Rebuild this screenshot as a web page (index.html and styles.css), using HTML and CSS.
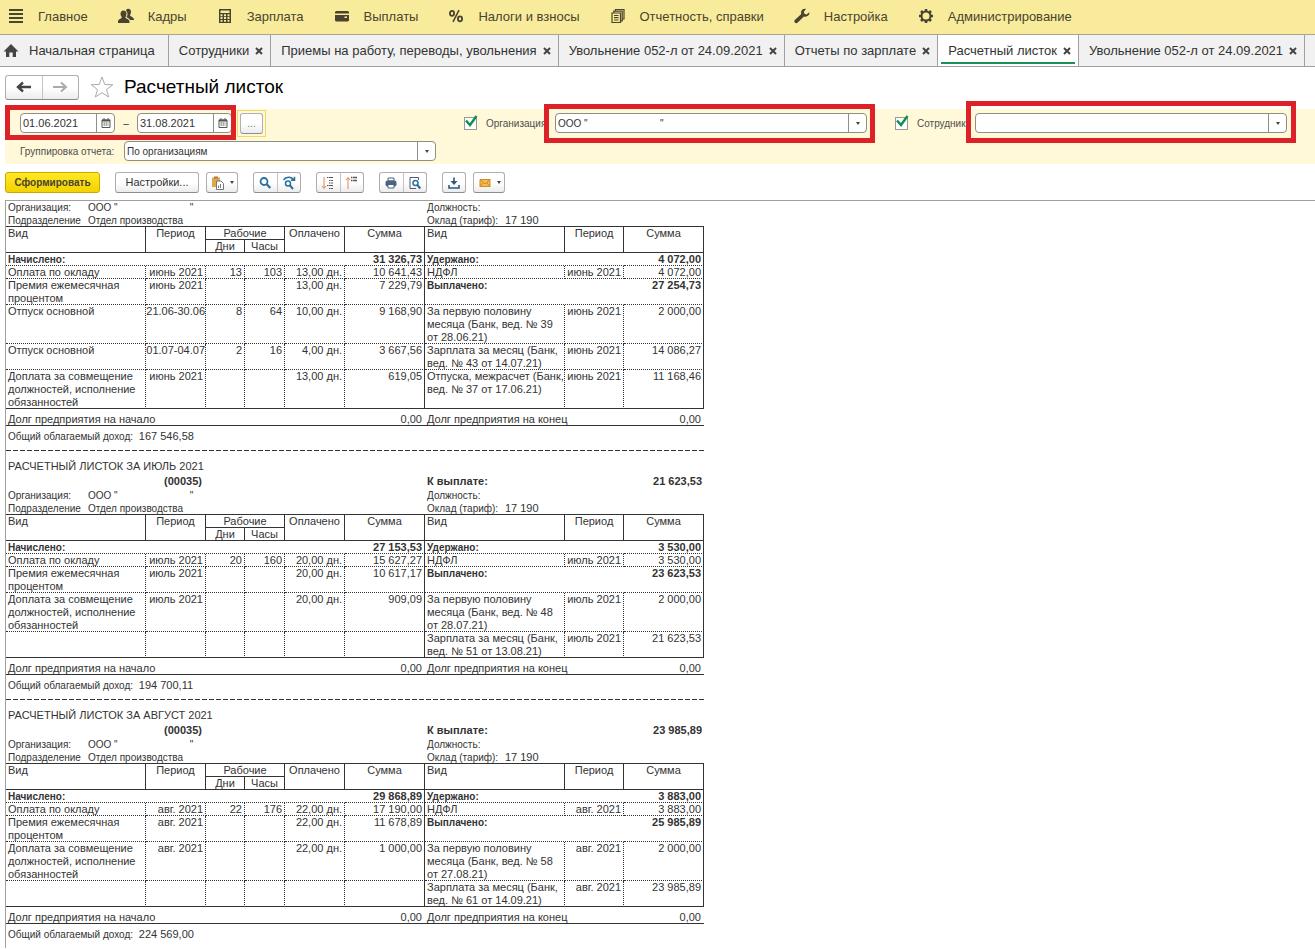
FILE: index.html
```html
<!DOCTYPE html>
<html lang="ru">
<head>
<meta charset="utf-8">
<title>Расчетный листок</title>
<link rel="stylesheet" href="styles.css">
</head>
<body>
<nav class="menu">
  <a class="menu-item" href="#"><svg class="icon" viewBox="0 0 16 16"><path d="M1 2h14M1 6h14M1 10h14M1 14h14" stroke="#4a432f" stroke-width="2"/></svg>Главное</a>
  <a class="menu-item" href="#"><svg class="icon" viewBox="0 0 16 16" fill="#4a432f"><path d="M8 2.500C8.400 0 13 0 13 3.500c0 2-.8 3-1 4 .3 1.200 4 1.400 4 4V12h-4C11 10 9 9.500 8.500 9c1.500-2 1.500-4-.5-6.500z"/><path d="M5.500 2.500c2 0 3 1.400 3 3.200S7.700 8.500 7.500 9.500c.2 1.200 4 1.500 4 4V15H0v-1.500c0-2.500 3.600-2.800 3.800-4-.3-1-1.300-2-1.300-3.800s1-3.200 3-3.200z"/></svg>Кадры</a>
  <a class="menu-item" href="#"><svg class="icon" viewBox="0 0 16 16"><path fill="#4a432f" fill-rule="evenodd" d="M2 1h12v14H2zM3.500 2.500V5h9V2.500zM3.500 6.200v2h2v-2zm3.500 0v2h2v-2zm3.500 0v2h2v-2zM3.500 9v2h2V9zM7 9v2h2V9zm3.500 0v2h2V9zM3.500 12v1.800h2V12zM7 12v1.800h2V12zm3.500 0v1.800h2V12z"/></svg>Зарплата</a>
  <a class="menu-item" href="#"><svg class="icon" viewBox="0 0 16 16"><path fill="#4a432f" fill-rule="evenodd" d="M2 3h12l1 1v1.500H1V4zM1 7h14v5.500l-1 1H2l-1-1zm9.500 1.500V10H13V8.500z"/></svg>Выплаты</a>
  <a class="menu-item" href="#"><svg class="icon" viewBox="0 0 16 16" fill="none" stroke="#4a432f" stroke-width="1.800"><ellipse cx="4" cy="5.300" rx="2.100" ry="2.500"/><ellipse cx="12" cy="10.800" rx="2.100" ry="2.500"/><path d="M11 2.200l-6 11.600" stroke-width="1.500"/></svg>Налоги и взносы</a>
  <a class="menu-item" href="#"><svg class="icon" viewBox="0 0 16 16" fill="none" stroke="#4a432f" stroke-width="1.200"><path d="M5.500 3V1.500h8.500V11h-1.500M3.800 4.800V3.200h8.400v9.600h-1.500M2 5h8.500v9.500H2zM4 7.500h4.500M4 9.700h4.500M4 12h4.500"/></svg>Отчетность, справки</a>
  <a class="menu-item" href="#"><svg class="icon" viewBox="0 0 16 16"><path fill="#4a432f" d="M15.300 4.200l-2.700 2.200-2.200-.7-.6-2L12 .9C9.500.2 7 2 7 4.500c0 .6.100 1 .3 1.500L.8 12c-1.500 1.700 1 4.200 2.700 2.700L9.900 8.400c3.100 1 6.100-1 5.400-4.200z"/></svg>Настройка</a>
  <a class="menu-item" href="#"><svg class="icon" viewBox="0 0 16 16" fill="none" stroke="#4a432f"><circle cx="8" cy="8" r="4.500" stroke-width="2"/><path stroke-width="2.600" d="M8 1V3.500M8 12.500v2.500M1 8h2.500M12.500 8h2.500M3 3l1.500 1.500M11.500 11.500L13 13M3 13l1.500-1.500M11.500 4.500L13 3"/></svg>Администрирование</a>
</nav>

<div class="tabs">
  <a class="tab tab-home" href="#"><svg class="icon" viewBox="0 0 16 16"><path fill="#444" d="M8 1l7.500 7.500H13V14H9.700V9.500H6.300V14H3V8.500H.5z"/></svg>Начальная страница</a>
  <a class="tab" href="#">Сотрудники<svg class="close" viewBox="0 0 8 8"><path d="M1 1l6 6M7 1L1 7"/></svg></a>
  <a class="tab" href="#">Приемы на работу, переводы, увольнения<svg class="close" viewBox="0 0 8 8"><path d="M1 1l6 6M7 1L1 7"/></svg></a>
  <a class="tab" href="#">Увольнение 052-л от 24.09.2021<svg class="close" viewBox="0 0 8 8"><path d="M1 1l6 6M7 1L1 7"/></svg></a>
  <a class="tab" href="#">Отчеты по зарплате<svg class="close" viewBox="0 0 8 8"><path d="M1 1l6 6M7 1L1 7"/></svg></a>
  <a class="tab tab-active" href="#">Расчетный листок<svg class="close" viewBox="0 0 8 8"><path d="M1 1l6 6M7 1L1 7"/></svg></a>
  <a class="tab" href="#">Увольнение 052-л от 24.09.2021<svg class="close" viewBox="0 0 8 8"><path d="M1 1l6 6M7 1L1 7"/></svg></a>
</div>

<header class="page-head">
  <div class="btn-group history">
    <button type="button" aria-label="Назад"><svg viewBox="0 0 16 12" width="16" height="12"><path d="M15 6H3M7 1.500L2 6l5 4.500" fill="none" stroke="#444" stroke-width="2.400"/></svg></button>
    <button type="button" aria-label="Вперед"><svg viewBox="0 0 16 12" width="16" height="12"><path d="M1 6h12M9 1.500L14 6l-5 4.500" fill="none" stroke="#aaa" stroke-width="2"/></svg></button>
  </div>
  <svg class="star" viewBox="0 0 24 22"><path d="M12 1l2.800 7.500 8 .2-6.300 4.900L18.700 21 12 16.700 5.300 21l2.200-7.400L1.200 8.700l8-.2z" fill="#fff" stroke="#aaa"/></svg>
  <h1>Расчетный листок</h1>
</header>

<form class="filters">
  <div class="filter-row">
    <div class="period">
      <div class="marked marked-dates">
        <div class="field date"><input type="text" value="01.06.2021" aria-label="Начало периода"><button type="button" class="addon" aria-label="Календарь"><svg viewBox="0 0 10 10" width="10" height="10"><path d="M1 2h8v7.500H1z" fill="#fff" stroke="#555"/><path d="M1 2.500h8" stroke="#555" stroke-width="2"/><path d="M3 0v2M7 0v2M2.500 5h5M2.500 7h5" stroke="#555" stroke-dasharray="1.500 .5"/></svg></button></div>
        <span class="dash">–</span>
        <div class="field date"><input type="text" value="31.08.2021" aria-label="Конец периода"><button type="button" class="addon" aria-label="Календарь"><svg viewBox="0 0 10 10" width="10" height="10"><path d="M1 2h8v7.500H1z" fill="#fff" stroke="#555"/><path d="M1 2.500h8" stroke="#555" stroke-width="2"/><path d="M3 0v2M7 0v2M2.500 5h5M2.500 7h5" stroke="#555" stroke-dasharray="1.500 .5"/></svg></button></div>
      </div>
      <div class="more-frame"><button type="button" class="more">...</button></div>
    </div>
    <div class="filter">
      <label class="check label-org"><input type="checkbox" checked><svg class="tick" viewBox="0 0 14 14"><path d="M2 5.500l4 4.500L12.500 1" fill="none" stroke="#0f8f50" stroke-width="2.400"/></svg>Организация:</label>
      <div class="marked marked-org"><div class="field combo"><select aria-label="Организация"><option>ООО "&nbsp;&nbsp;&nbsp;&nbsp;&nbsp;&nbsp;&nbsp;&nbsp;&nbsp;&nbsp;&nbsp;&nbsp;&nbsp;&nbsp;&nbsp;&nbsp;&nbsp;&nbsp;&nbsp;&nbsp;&nbsp;&nbsp;&nbsp;&nbsp;&nbsp;&nbsp;"</option></select><span class="addon arrow"></span></div></div>
    </div>
    <div class="filter">
      <label class="check label-emp"><input type="checkbox" checked><svg class="tick" viewBox="0 0 14 14"><path d="M2 5.500l4 4.500L12.500 1" fill="none" stroke="#0f8f50" stroke-width="2.400"/></svg>Сотрудник:</label>
      <div class="marked marked-emp"><div class="field combo"><select aria-label="Сотрудник"><option></option></select><span class="addon arrow"></span></div></div>
    </div>
  </div>
  <div class="grouping">
    <label for="grouping">Группировка отчета:</label>
    <div class="field combo"><select id="grouping"><option>По организациям</option></select><span class="addon arrow"></span></div>
  </div>
</form>

<div class="toolbar">
  <button type="button" class="btn primary">Сформировать</button>
  <button type="button" class="btn settings">Настройки...</button>
  <button type="button" class="btn drop" aria-label="Варианты"><svg width="14" height="14" viewBox="0 0 14 14"><path d="M1 1.500h8V11H1z" fill="#e0a84e"/><path d="M3 .5h4v2H3z" fill="#a97b35"/><path d="M5.500 5h4.500l2.500 2.500v6h-7z" fill="#fff" stroke="#777"/><path d="M7.500 12V9.500M9.500 12V8" stroke="#777"/></svg><span class="arrow-down"></span></button>
  <div class="btn-group pair-a">
    <button type="button" aria-label="Найти"><svg width="14" height="14" viewBox="0 0 14 14" fill="none" stroke="#2a6f9e"><circle cx="6" cy="5.500" r="3.500" stroke-width="1.800"/><path d="M8.500 8l3.800 4" stroke-width="2.200"/></svg></button>
    <button type="button" aria-label="Найти далее"><svg width="14" height="14" viewBox="0 0 14 14" fill="none" stroke="#2a6f9e"><path d="M1.500 4C4 .5 9 .5 11.500 3.500M12.500.8v3.500H9" stroke-width="1.500"/><circle cx="6" cy="7.500" r="2.500" stroke-width="1.500"/><path d="M8 9.500l3 3.500" stroke-width="2"/></svg></button>
  </div>
  <div class="btn-group pair-b">
    <button type="button" aria-label="Развернуть"><svg width="14" height="14" viewBox="0 0 14 14" fill="none"><path d="M3 1v11M1 10l2 2.500L5 10" stroke="#dd8a4a"/><path d="M6 1.500h6M8 4.500h4M8 7h4M6 9.500h6M8 12.500h4" stroke="#555" stroke-dasharray="1.500 .6 6"/></svg></button>
    <button type="button" aria-label="Свернуть"><svg width="14" height="14" viewBox="0 0 14 14" fill="none"><path d="M3 13V1.500M1 4l2-2.500L5 4" stroke="#dd8a4a"/><path d="M6 1.500h6M6 4.500h6" stroke="#555" stroke-width="1.500" stroke-dasharray="1.500 .6 6"/></svg></button>
  </div>
  <div class="btn-group pair-b">
    <button type="button" aria-label="Печать"><svg width="14" height="14" viewBox="0 0 14 14"><path d="M4 2h6v3H4z" fill="#fff" stroke="#4a6580"/><rect x="1.500" y="4.500" width="11" height="6" rx="2" fill="#4a6580"/><path d="M4 8.500h6v3.500H4z" fill="#fff" stroke="#4a6580"/></svg></button>
    <button type="button" aria-label="Предварительный просмотр"><svg width="14" height="14" viewBox="0 0 14 14" fill="none" stroke="#2a6f9e"><path d="M8 12.500H2v-11h8.500V4" stroke="#557"/><circle cx="7.500" cy="7" r="2.500" stroke-width="1.500"/><path d="M9.300 9l3 3.500" stroke-width="2"/></svg></button>
  </div>
  <button type="button" class="btn save" aria-label="Сохранить"><svg width="14" height="14" viewBox="0 0 14 14"><path d="M2 9v3h10V9" fill="none" stroke="#2d5878" stroke-width="1.600"/><path d="M6.200 1.500h1.600V5h2.700L7 9 3.500 5h2.700z" fill="#2d5878"/></svg></button>
  <button type="button" class="btn drop" aria-label="Отправить"><svg width="14" height="14" viewBox="0 0 14 14" fill="#f2bd55" stroke="#cf8a25"><path d="M2 3.500h10v7H2z"/><path d="M2 3.500l5 4.500 5-4.500M2 10.500l3.500-4M12 10.500l-3.500-4" fill="none"/></svg><span class="arrow-down"></span></button>
</div>

<main class="sheet">
  <section class="slip">
    <div class="slip-info"><span>Организация:</span><span class="org">ООО "<i></i>"</span><span>Должность:</span><span>Подразделение</span><span>Отдел производства</span><span>Оклад (тариф): <b class="num">17 190</b></span></div>
    <table>
      <colgroup><col class="c-kind"><col class="c-period"><col class="c-days"><col class="c-hours"><col class="c-period"><col class="c-sum"><col class="c-kind"><col class="c-period2"><col class="c-sum"></colgroup>
      <thead>
        <tr><th rowspan="2" class="kind">Вид</th><th rowspan="2">Период</th><th colspan="2">Рабочие</th><th rowspan="2">Оплачено</th><th rowspan="2">Сумма</th><th rowspan="2" class="kind">Вид</th><th rowspan="2">Период</th><th rowspan="2">Сумма</th></tr>
        <tr><th>Дни</th><th>Часы</th></tr>
      </thead>
      <tbody>
        <tr><td colspan="5" class="total kind">Начислено:</td><td class="total sum">31 326,73</td><td colspan="2" class="total kind">Удержано:</td><td class="total sum">4 072,00</td></tr>
        <tr><td class="kind">Оплата по окладу</td><td>июнь 2021</td><td>13</td><td>103</td><td>13,00 дн.</td><td class="sum">10 641,43</td><td class="kind">НДФЛ</td><td>июнь 2021</td><td class="sum">4 072,00</td></tr>
        <tr><td class="kind"><p>Премия ежемесячная процентом</p></td><td>июнь 2021</td><td></td><td></td><td>13,00 дн.</td><td class="sum">7 229,79</td><td colspan="2" class="total kind">Выплачено:</td><td class="total sum">27 254,73</td></tr>
        <tr><td class="kind">Отпуск основной</td><td class="range">21.06-30.06</td><td>8</td><td>64</td><td>10,00 дн.</td><td class="sum">9 168,90</td><td class="kind"><p>За первую половину<br>месяца (Банк, вед. № 39<br>от 28.06.21)</p></td><td>июнь 2021</td><td class="sum">2 000,00</td></tr>
        <tr><td class="kind">Отпуск основной</td><td class="range">01.07-04.07</td><td>2</td><td>16</td><td>4,00 дн.</td><td class="sum">3 667,56</td><td class="kind"><p>Зарплата за месяц (Банк,<br>вед. № 43 от 14.07.21)</p></td><td>июнь 2021</td><td class="sum">14 086,27</td></tr>
        <tr><td class="kind"><p>Доплата за совмещение должностей, исполнение обязанностей</p></td><td>июнь 2021</td><td></td><td></td><td>13,00 дн.</td><td class="sum">619,05</td><td class="kind"><p>Отпуска, межрасчет (Банк,<br>вед. № 37 от 17.06.21)</p></td><td>июнь 2021</td><td class="sum">11 168,46</td></tr>
      </tbody>
    </table>
    <div class="debt"><span>Долг предприятия на начало</span><span class="num">0,00</span><span>Долг предприятия на конец</span><span class="num">0,00</span></div>
    <div class="income">Общий облагаемый доход: <span class="num">167 546,58</span></div>
  </section>

  <section class="slip">
    <h2>РАСЧЕТНЫЙ ЛИСТОК ЗА ИЮЛЬ 2021</h2>
    <div class="payable"><span class="code">(00035)</span><span>К выплате:</span><span class="amount">21 623,53</span></div>
    <div class="slip-info"><span>Организация:</span><span class="org">ООО "<i></i>"</span><span>Должность:</span><span>Подразделение</span><span>Отдел производства</span><span>Оклад (тариф): <b class="num">17 190</b></span></div>
    <table>
      <colgroup><col class="c-kind"><col class="c-period"><col class="c-days"><col class="c-hours"><col class="c-period"><col class="c-sum"><col class="c-kind"><col class="c-period2"><col class="c-sum"></colgroup>
      <thead>
        <tr><th rowspan="2" class="kind">Вид</th><th rowspan="2">Период</th><th colspan="2">Рабочие</th><th rowspan="2">Оплачено</th><th rowspan="2">Сумма</th><th rowspan="2" class="kind">Вид</th><th rowspan="2">Период</th><th rowspan="2">Сумма</th></tr>
        <tr><th>Дни</th><th>Часы</th></tr>
      </thead>
      <tbody>
        <tr><td colspan="5" class="total kind">Начислено:</td><td class="total sum">27 153,53</td><td colspan="2" class="total kind">Удержано:</td><td class="total sum">3 530,00</td></tr>
        <tr><td class="kind">Оплата по окладу</td><td>июль 2021</td><td>20</td><td>160</td><td>20,00 дн.</td><td class="sum">15 627,27</td><td class="kind">НДФЛ</td><td>июль 2021</td><td class="sum">3 530,00</td></tr>
        <tr><td class="kind"><p>Премия ежемесячная процентом</p></td><td>июль 2021</td><td></td><td></td><td>20,00 дн.</td><td class="sum">10 617,17</td><td colspan="2" class="total kind">Выплачено:</td><td class="total sum">23 623,53</td></tr>
        <tr><td class="kind"><p>Доплата за совмещение должностей, исполнение обязанностей</p></td><td>июль 2021</td><td></td><td></td><td>20,00 дн.</td><td class="sum">909,09</td><td class="kind"><p>За первую половину<br>месяца (Банк, вед. № 48<br>от 28.07.21)</p></td><td>июль 2021</td><td class="sum">2 000,00</td></tr>
        <tr><td></td><td></td><td></td><td></td><td></td><td class="sum"></td><td class="kind"><p>Зарплата за месяц (Банк,<br>вед. № 51 от 13.08.21)</p></td><td>июль 2021</td><td class="sum">21 623,53</td></tr>
      </tbody>
    </table>
    <div class="debt"><span>Долг предприятия на начало</span><span class="num">0,00</span><span>Долг предприятия на конец</span><span class="num">0,00</span></div>
    <div class="income">Общий облагаемый доход: <span class="num">194 700,11</span></div>
  </section>

  <section class="slip">
    <h2>РАСЧЕТНЫЙ ЛИСТОК ЗА АВГУСТ 2021</h2>
    <div class="payable"><span class="code">(00035)</span><span>К выплате:</span><span class="amount">23 985,89</span></div>
    <div class="slip-info"><span>Организация:</span><span class="org">ООО "<i></i>"</span><span>Должность:</span><span>Подразделение</span><span>Отдел производства</span><span>Оклад (тариф): <b class="num">17 190</b></span></div>
    <table>
      <colgroup><col class="c-kind"><col class="c-period"><col class="c-days"><col class="c-hours"><col class="c-period"><col class="c-sum"><col class="c-kind"><col class="c-period2"><col class="c-sum"></colgroup>
      <thead>
        <tr><th rowspan="2" class="kind">Вид</th><th rowspan="2">Период</th><th colspan="2">Рабочие</th><th rowspan="2">Оплачено</th><th rowspan="2">Сумма</th><th rowspan="2" class="kind">Вид</th><th rowspan="2">Период</th><th rowspan="2">Сумма</th></tr>
        <tr><th>Дни</th><th>Часы</th></tr>
      </thead>
      <tbody>
        <tr><td colspan="5" class="total kind">Начислено:</td><td class="total sum">29 868,89</td><td colspan="2" class="total kind">Удержано:</td><td class="total sum">3 883,00</td></tr>
        <tr><td class="kind">Оплата по окладу</td><td>авг. 2021</td><td>22</td><td>176</td><td>22,00 дн.</td><td class="sum">17 190,00</td><td class="kind">НДФЛ</td><td>авг. 2021</td><td class="sum">3 883,00</td></tr>
        <tr><td class="kind"><p>Премия ежемесячная процентом</p></td><td>авг. 2021</td><td></td><td></td><td>22,00 дн.</td><td class="sum">11 678,89</td><td colspan="2" class="total kind">Выплачено:</td><td class="total sum">25 985,89</td></tr>
        <tr><td class="kind"><p>Доплата за совмещение должностей, исполнение обязанностей</p></td><td>авг. 2021</td><td></td><td></td><td>22,00 дн.</td><td class="sum">1 000,00</td><td class="kind"><p>За первую половину<br>месяца (Банк, вед. № 58<br>от 27.08.21)</p></td><td>авг. 2021</td><td class="sum">2 000,00</td></tr>
        <tr><td></td><td></td><td></td><td></td><td></td><td class="sum"></td><td class="kind"><p>Зарплата за месяц (Банк,<br>вед. № 61 от 14.09.21)</p></td><td>авг. 2021</td><td class="sum">23 985,89</td></tr>
      </tbody>
    </table>
    <div class="debt"><span>Долг предприятия на начало</span><span class="num">0,00</span><span>Долг предприятия на конец</span><span class="num">0,00</span></div>
    <div class="income">Общий облагаемый доход: <span class="num">224 569,00</span></div>
  </section>
</main>
</body>
</html>
```
FILE: styles.css
```css
* { box-sizing: border-box; }
body {
  margin: 0;
  background: #fff;
  color: #333;
  font: 10px/13px "Liberation Sans", Arial, sans-serif;
}
a { color: inherit; text-decoration: none; }
button, input, select { font: inherit; color: inherit; margin: 0; }
svg { display: block; flex: none; }

/* Main menu */
.menu {
  display: flex;
  gap: 30px;
  height: 34px;
  padding: 0 0 2px 8px;
  background: #f8ec9c;
  color: #4a432f;
  font-size: 13px;
}
.menu-item { display: flex; align-items: center; gap: 14px; white-space: nowrap; }
.icon { width: 16px; height: 16px; }

/* Open windows */
.tabs {
  display: flex;
  height: 33px;
  border-top: 1px solid #aaa58c;
  border-bottom: 1px solid #a0a0a0;
  background: #f1f1f1;
  font-size: 13px;
}
.tab {
  display: flex;
  align-items: center;
  gap: 6px;
  padding: 0 7px 0 10px;
  border-right: 1px solid #a0a0a0;
  white-space: nowrap;
}
.tab-home { gap: 10px; padding: 0 13px 0 3px; }
.tab-active { position: relative; background: #fff; }
.tab-active::after {
  content: "";
  position: absolute;
  left: 3px;
  right: 3px;
  bottom: 2px;
  height: 2px;
  background: #1c9157;
}
.close { width: 8px; height: 8px; fill: none; stroke: #444; stroke-width: 2; }

/* Title */
.page-head { display: flex; align-items: center; height: 42px; padding: 0 5px 2px; }
.star { width: 24px; height: 22px; margin: 0 10px 0 11px; }
h1 { margin: 0; color: #000; font-size: 19px; font-weight: 400; line-height: 24px; }

.btn, .btn-group, .more {
  border: 1px solid #b0b0b0;
  border-bottom-color: #8c8c8c;
  border-radius: 3px;
  background: linear-gradient(#fff 50%, #ececec);
}
.btn-group { display: flex; overflow: hidden; }
.btn-group button {
  display: flex;
  flex: 1;
  align-items: center;
  justify-content: center;
  padding: 0;
  border: 0;
  background: none;
}
.btn-group button + button { border-left: 1px solid #c4c4c4; }
.history { width: 74px; height: 25px; }

/* Filters */
.filters { margin-left: 5px; padding: 0 0 3px 15px; background: #fff9da; color: #4d4d4d; }
.filter-row { display: grid; grid-template-columns: 444fr 431fr 420fr; height: 32px; align-items: start; }
.period, .filter, .grouping, .marked-dates { display: flex; align-items: center; }
.period, .filter { height: 28px; }
.marked { position: relative; }
.marked::after {
  content: "";
  position: absolute;
  inset: -9px -8px -10px -11px;
  border: 5px solid #dd2128;
  pointer-events: none;
}
.marked-dates::after { inset: -8px -4px -7px -15px; }
.marked-emp::after { inset: -12px -9px -10px -9px; }
.field {
  display: flex;
  height: 20px;
  border: 1px solid #8f8f85;
  border-radius: 4px;
  background: #fff;
  overflow: hidden;
}
.field input, .field select {
  flex: 1;
  min-width: 0;
  padding: 0 2px;
  border: 0;
  background: none;
  color: #333;
  appearance: none;
}
.date { width: 95px; font-size: 11px; }
.dash { width: 22px; text-align: center; color: #333; }
.addon {
  display: flex;
  flex: none;
  align-items: center;
  justify-content: center;
  width: 18px;
  padding: 0;
  border: 0;
  border-left: 1px solid #8f8f85;
  background: none;
}
.arrow::after, .arrow-down {
  content: "";
  width: 0;
  height: 0;
  border: 2px solid transparent;
  border-top: 3px solid #444;
  border-bottom: 0;
}
.combo { width: 312px; }
.more-frame { margin-left: 5px; padding: 2px; border: 1px solid #eed964; }
.more {
  display: block;
  width: 23px;
  height: 21px;
  padding: 0;
  color: #777;
}
.check { position: relative; display: flex; align-items: center; gap: 9px; white-space: nowrap; }
.label-org { width: 91px; }
.label-emp { width: 80px; }
.check input {
  width: 13px;
  height: 13px;
  border: 1px solid #999;
  background: #fff;
  appearance: none;
}
.tick { position: absolute; left: 0; top: -2px; width: 14px; height: 14px; }
.grouping { gap: 5px; }
.grouping label { width: 99px; white-space: nowrap; }

/* Commands */
.toolbar { display: flex; gap: 15px; height: 36px; padding: 8px 5px 7px; }
.btn { display: flex; align-items: center; justify-content: center; padding: 0; }
.toolbar svg { width: 14px; height: 14px; }
.primary {
  width: 95px;
  border-color: #c7a900;
  background: linear-gradient(#ffe924, #f3d200);
  color: #4a432f;
  font-weight: 700;
}
.settings { width: 84px; font-size: 11px; }
.drop { width: 32px; gap: 5px; margin-left: -8px; }
.pair-a, .pair-b { width: 48px; }
.save { width: 24px; }

/* Report */
.sheet { margin-left: 5px; border-top: 1px solid #a0a0a0; border-left: 1px solid #a0a0a0; font-size: 11px; }
.slip { width: 698px; }
.slip + .slip {
  padding-top: 7px;
  background: repeating-linear-gradient(90deg, #333 0 5px, transparent 5px 7px) 0 0 / 100% 1px no-repeat;
}
.slip h2 { margin: 0; padding-left: 2px; font-size: 11px; font-weight: 400; line-height: 18px; }
.payable {
  display: grid;
  grid-template-columns: 419px 1fr auto;
  height: 14px;
  padding: 0 2px;
  font-weight: 700;
}
.payable .code { padding-left: 156px; }
.slip-info {
  display: grid;
  grid-template-columns: 80px 339px 1fr;
  margin-bottom: -1px;
  padding-left: 2px;
  font-size: 10px;
}
.org i { display: inline-block; width: 72px; }
.num { font-size: 11px; font-weight: 400; }
.slip-info .num { margin-left: 4px; }

table {
  width: 100%;
  table-layout: fixed;
  border-collapse: separate;
  border-spacing: 0;
  border-top: 1px solid #333;
  line-height: 12px;
}
.c-kind { width: 140px; }
.c-period { width: 60px; }
.c-days { width: 39px; }
.c-hours { width: 40px; }
.c-period2 { width: 59px; }
.c-sum { width: 80px; }
th, td {
  padding: 0 2px;
  border-right: 1px solid #333;
  border-bottom: 1px solid #333;
  vertical-align: top;
  white-space: nowrap;
}
th { font-weight: 400; text-align: center; }
td {
  height: 13px;
  border-right-style: dotted;
  border-bottom-style: dotted;
  text-align: right;
}
.kind { text-align: left; }
.range { padding: 0; }
.sum { border-right-style: solid; }
.total { border-right-color: transparent; font-weight: 700; }
.total.kind { padding-top: 1px; font-size: 10px; line-height: 11px; }
.total.sum { border-right-color: #333; }
tbody tr:last-child td { border-bottom-style: solid; }
td p { margin: 0 0 -1px; line-height: 13px; }
td:first-child p { white-space: normal; }

.debt {
  display: grid;
  grid-template-columns: 277px 139px 197px 1fr;
  height: 17px;
  padding: 4px 3px 0 2px;
  border-bottom: 1px solid #333;
  line-height: 12px;
}
.debt .num { text-align: right; }
.debt .num:nth-child(2) { padding-right: 2px; }
.debt .num + span { padding-left: 3px; }
.income { height: 24px; padding: 4px 2px 0; font-size: 10px; }
.income .num { margin-left: 3px; }
```
